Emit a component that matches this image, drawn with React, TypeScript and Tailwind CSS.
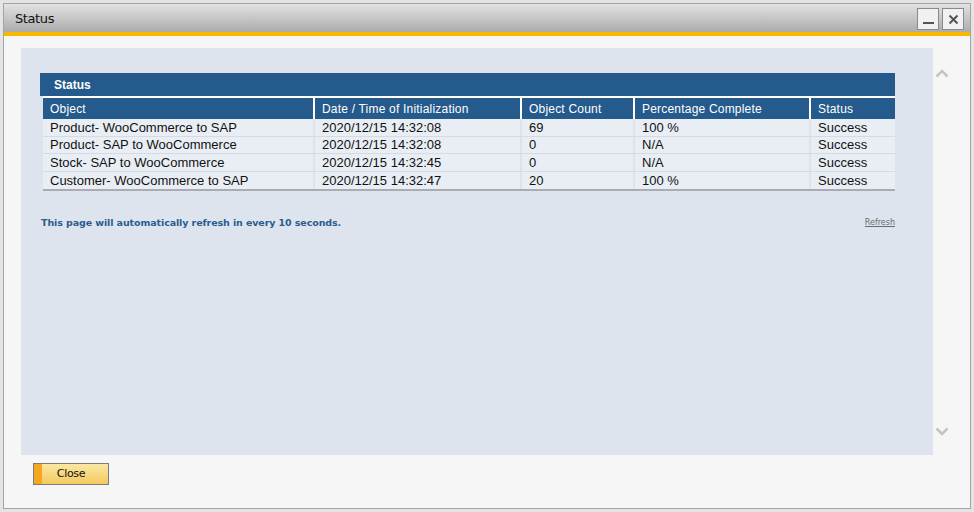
import React from "react";

type Row = {
  object: string;
  initialized: string;
  count: string;
  percent: string;
  status: string;
};

const ROWS: Row[] = [
  { object: "Product- WooCommerce to SAP", initialized: "2020/12/15 14:32:08", count: "69", percent: "100 %", status: "Success" },
  { object: "Product- SAP to WooCommerce", initialized: "2020/12/15 14:32:08", count: "0", percent: "N/A", status: "Success" },
  { object: "Stock- SAP to WooCommerce", initialized: "2020/12/15 14:32:45", count: "0", percent: "N/A", status: "Success" },
  { object: "Customer- WooCommerce to SAP", initialized: "2020/12/15 14:32:47", count: "20", percent: "100 %", status: "Success" },
];

const COLS = [
  { label: "Object", width: "w-[272px]" },
  { label: "Date / Time of Initialization", width: "w-[207px]" },
  { label: "Object Count", width: "w-[113px]" },
  { label: "Percentage Complete", width: "w-[176px]" },
  { label: "Status", width: "flex-1" },
];

function Chevron({ down }: { down?: boolean }) {
  return (
    <svg width="14" height="9" viewBox="0 0 14 9" className="block">
      <path
        d={down ? "M1.5 1.5 L7 7 L12.5 1.5" : "M1.5 7.5 L7 2 L12.5 7.5"}
        fill="none"
        stroke="#c4c4c4"
        strokeWidth="2.6"
      />
    </svg>
  );
}

export default function App() {
  const cells = (r: Row) => [r.object, r.initialized, r.count, r.percent, r.status];

  return (
    <div className="h-[512px] w-[974px] bg-[#e4e4e4] p-[3px] font-['Liberation_Sans',Arial,sans-serif]">
      <div className="flex h-full flex-col border border-[#a3a3a3] bg-[#f6f6f6]">
        {/* title bar */}
        <div className="flex h-[28px] items-center justify-between bg-gradient-to-b from-[#e2e2e2] to-[#acacac] pl-[11px] pr-[6px] pt-[2px]">
          <span className="text-[13px] text-[#111] font-['DejaVu_Sans',sans-serif] tracking-[-0.4px]">Status</span>
          <div className="flex gap-[3px]">
            <div className="flex h-[22px] w-[22px] items-end justify-center border border-[#8a8a8a] bg-[#f1f1f1] pb-[5px]">
              <div className="h-[2px] w-[11px] bg-[#555]" />
            </div>
            <div className="flex h-[22px] w-[22px] items-center justify-center border border-[#8a8a8a] bg-[#f1f1f1]">
              <svg width="11" height="11" viewBox="0 0 11 11">
                <path d="M1.5 1.5 L9.5 9.5 M9.5 1.5 L1.5 9.5" stroke="#555" strokeWidth="2" />
              </svg>
            </div>
          </div>
        </div>
        <div className="h-[4px] bg-[#f8b700]" />

        {/* body */}
        <div className="flex flex-1 flex-col pl-[17px] pr-[16px] pt-[12px]">
          <div className="flex">
            <div className="h-[407px] w-[912px] bg-[#dde4ee] pl-[19px] pt-[25px]">
              <div className="w-[855px]">
                <div className="flex h-[23px] items-center bg-[#245a8c] pl-[14px] text-[12px] font-bold text-white">
                  Status
                </div>
                <div className="ml-[3px] border-t-2 border-white">
                  <div className="flex h-[21px] bg-[#245a8c] text-[12px] tracking-[0.2px] text-white">
                    {COLS.map((c, i) => (
                      <div
                        key={c.label}
                        className={`${c.width} flex items-center pl-[7px] ${i < COLS.length - 1 ? "border-r-2 border-white" : ""}`}
                      >
                        {c.label}
                      </div>
                    ))}
                  </div>
                  <div className="border-b-2 border-[#a9adb3]">
                    {ROWS.map((r, ri) => (
                      <div
                        key={r.object}
                        className={`flex h-[17.5px] bg-[#e9eef5] text-[13px] text-[#111] ${ri < ROWS.length - 1 ? "border-b border-[#d5dbe4]" : ""}`}
                      >
                        {cells(r).map((v, i) => (
                          <div
                            key={i}
                            className={`${COLS[i].width} flex items-center pl-[7px] ${i < COLS.length - 1 ? "border-r-2 border-[#dde3ea]" : ""}`}
                          >
                            {v}
                          </div>
                        ))}
                      </div>
                    ))}
                  </div>
                </div>
                <div className="mt-[25px] flex items-center justify-between">
                  <span className="text-[9.5px] font-bold text-[#2a5c8e] font-['DejaVu_Sans',Verdana,sans-serif] tracking-[-0.1px] pl-[1px]">
                    This page will automatically refresh in every 10 seconds.
                  </span>
                  <span className="text-[8px] text-[#6b6b6b] underline font-['DejaVu_Sans',sans-serif] pr-[-1px]">Refresh</span>
                </div>
              </div>
            </div>
            <div className="flex flex-1 flex-col items-center justify-between pt-[21px] pb-[19px] pr-[4px]">
              <Chevron />
              <Chevron down />
            </div>
          </div>
          <div className="mt-[8px] pl-[12px]">
            <button
              type="button"
              className="flex h-[22px] w-[76px] border border-[#7c7c7c] bg-gradient-to-b from-[#fbe7a2] to-[#f3c95c] p-0 text-[12px] text-[#111]"
            >
              <span className="h-full w-[8px] bg-[#f3a81f]" />
              <span className="flex flex-1 items-center justify-center pr-[8px] font-['DejaVu_Sans',sans-serif] text-[11px] tracking-[-0.3px]">
                Close
              </span>
            </button>
          </div>
        </div>
      </div>
    </div>
  );
}
